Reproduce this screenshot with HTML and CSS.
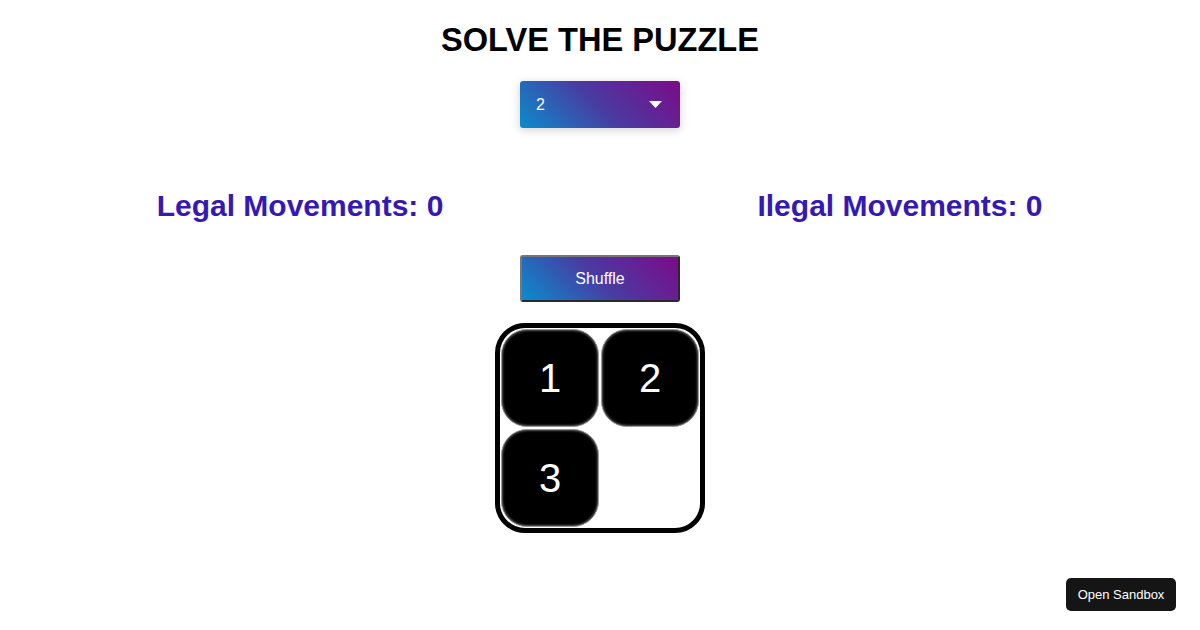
FILE: index.html
```html
<!DOCTYPE html>
<html lang="en">
<head>
<meta charset="utf-8">
<title>Solve the puzzle</title>
<link rel="stylesheet" href="styles.css">
</head>
<body>
<main class="app">
  <h1 class="title">SOLVE THE PUZZLE</h1>
  <div class="select-wrap">
    <select class="size-select">
      <option>2</option>
      <option>3</option>
      <option>4</option>
    </select>
    <svg class="select-arrow" width="13" height="7" viewBox="0 0 13 7"><path d="M0 0H13L6.5 7Z" fill="#fff"/></svg>
  </div>
  <div class="stats">
    <h2 class="stat">Legal Movements: 0</h2>
    <h2 class="stat">Ilegal Movements: 0</h2>
  </div>
  <button class="shuffle">Shuffle</button>
  <div class="board">
    <div class="tile">1</div>
    <div class="tile">2</div>
    <div class="tile">3</div>
    <div class="empty"></div>
  </div>
</main>
<button class="sandbox">Open Sandbox</button>
</body>
</html>
```
FILE: styles.css
```css
html, body {
  margin: 0;
  padding: 0;
  background: #fff;
}
body {
  font-family: "Liberation Sans", Arial, sans-serif;
  color: #000;
}
.app {
  display: flex;
  flex-direction: column;
  align-items: center;
}
.title {
  margin: 21px 0 0;
  font-size: 32.6px;
  font-weight: bold;
  line-height: 37px;
  text-align: center;
}
.select-wrap {
  position: relative;
  margin-top: 23px;
  width: 160px;
  height: 47px;
}
.size-select {
  -webkit-appearance: none;
  appearance: none;
  width: 160px;
  height: 47px;
  border: none;
  border-radius: 3px;
  padding: 0 0 0 16px;
  font-family: "Liberation Sans", Arial, sans-serif;
  font-size: 16px;
  color: #fff;
  background: linear-gradient(45deg, #0a8dcd 0%, #4a3aa0 50%, #7c0b88 100%);
  box-shadow: 0 2px 10px rgba(0, 0, 0, 0.18);
  outline: none;
}
.size-select option {
  color: #000;
}
.select-arrow {
  position: absolute;
  right: 18px;
  top: 20px;
  pointer-events: none;
}
.stats {
  align-self: stretch;
  display: grid;
  grid-template-columns: 1fr 1fr;
  margin-top: 60px;
}
.stat {
  margin: 0;
  font-size: 30px;
  line-height: 35px;
  font-weight: bold;
  color: #3519b3;
  text-align: center;
}
.shuffle {
  margin-top: 32px;
  width: 160px;
  height: 47px;
  border: 2px solid;
  border-color: #777 #2a2a2a #2a2a2a #777;
  border-radius: 3px;
  background: linear-gradient(45deg, #0a8dcd 0%, #4a3aa0 50%, #7c0b88 100%);
  color: #fff;
  font-family: "Liberation Sans", Arial, sans-serif;
  font-size: 16px;
  padding: 0;
}
.board {
  margin-top: 21px;
  width: 200px;
  height: 200px;
  border: 5px solid #000;
  border-radius: 30px;
  display: grid;
  grid-template-columns: 100px 100px;
  grid-template-rows: 100px 100px;
}
.tile {
  box-sizing: border-box;
  margin: 1px;
  width: 98px;
  height: 98px;
  background: #000;
  border: 1px solid #9a9a9a;
  box-shadow: inset 0 0 2px 1px #555;
  border-radius: 26px;
  color: #fff;
  font-size: 40px;
  display: flex;
  align-items: center;
  justify-content: center;
}
.sandbox {
  position: fixed;
  right: 24px;
  bottom: 19px;
  width: 110px;
  height: 33px;
  background: #151515;
  color: #fff;
  border: none;
  border-radius: 5px;
  font-family: "Liberation Sans", Arial, sans-serif;
  font-size: 13px;
  padding: 0;
}
```
